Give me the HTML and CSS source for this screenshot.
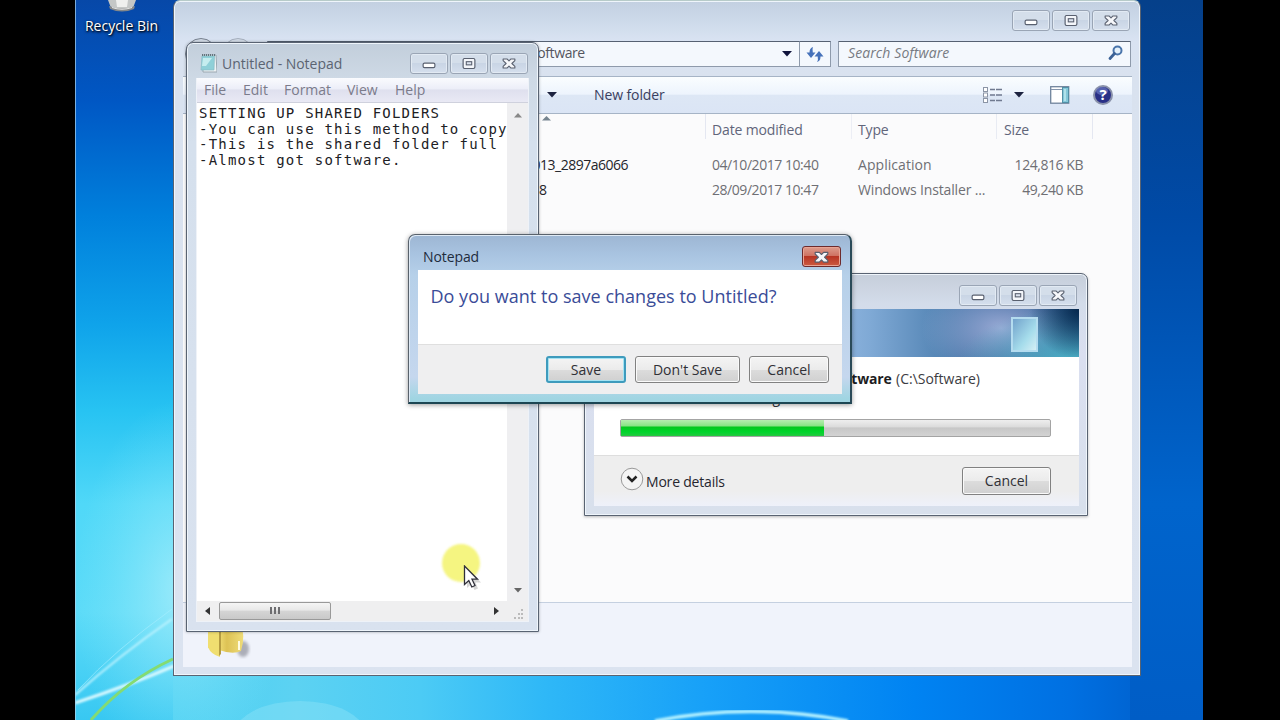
FILE: index.html
```html
<!DOCTYPE html>
<html lang="en">
<head>
<meta charset="utf-8">
<title>Desktop</title>
<link rel="stylesheet" href="styles.css">
</head>
<body>
<svg width="0" height="0" class="defs">
  <symbol id="min" viewBox="0 0 38 21"><rect x="12.5" y="10" width="13" height="5" rx="1.5" fill="#fff" stroke="#59606f" stroke-width="1.3"/></symbol>
  <symbol id="max" viewBox="0 0 38 21"><rect x="12.500" y="5" width="13" height="11" rx="1.5" fill="#f4f6fa" stroke="#59606f" stroke-width="1.3"/><rect x="16" y="8.500" width="6" height="3.500" fill="#dce3ee" stroke="#59606f" stroke-width="1.2"/></symbol>
  <symbol id="close" viewBox="0 0 38 21"><path d="M12.500 5.500h4.300l2.200 2.200 2.200-2.200h4.300v1.700l-3.300 3.300 3.300 3.300v1.700h-4.300L19 13.300l-2.200 2.200h-4.300v-1.700l3.300-3.300-3.300-3.300z" fill="#f6f7fa" stroke="#59606f" stroke-width="1.200" stroke-linejoin="round"/></symbol>
</svg>
<main class="desktop">
  <svg class="wallpaper" viewBox="75 0 1128 720">
    <defs>
      <linearGradient id="lg" x1="0" y1="0" x2="0" y2="1"><stop offset="0" stop-color="#0748a8"/><stop offset=".14" stop-color="#0057c4"/><stop offset=".3" stop-color="#0080dc"/><stop offset=".45" stop-color="#0fa3ea"/><stop offset=".57" stop-color="#27c3f2"/><stop offset=".7" stop-color="#50d8f8"/><stop offset=".85" stop-color="#5cdbf8"/><stop offset="1" stop-color="#38c8f2"/></linearGradient>
      <linearGradient id="rg" x1="0" y1="0" x2="0" y2="1"><stop offset="0" stop-color="#05408a"/><stop offset=".3" stop-color="#004aa6"/><stop offset=".7" stop-color="#0064cc"/><stop offset="1" stop-color="#005dc6"/></linearGradient>
      <linearGradient id="bg"><stop offset="0" stop-color="#4bd0f3"/><stop offset=".12" stop-color="#5cd2f2"/><stop offset=".24" stop-color="#4ccbf5"/><stop offset=".36" stop-color="#2fb8f7"/><stop offset=".52" stop-color="#17a0f8"/><stop offset=".72" stop-color="#0083f2"/><stop offset=".87" stop-color="#0070e2"/><stop offset="1" stop-color="#0058c2"/></linearGradient>
      <radialGradient id="glow"><stop offset="0" stop-color="#c4f4fc" stop-opacity=".6"/><stop offset="1" stop-color="#8beafa" stop-opacity="0"/></radialGradient>
      <filter id="soft"><feGaussianBlur stdDeviation="1.200"/></filter>
    </defs>
    <rect x="75" width="300" height="720" fill="url(#lg)"/>
    <rect x="173" y="660" width="1030" height="60" fill="url(#bg)"/>
    <rect x="1130" width="73" height="720" fill="url(#rg)"/>
    <ellipse cx="180" cy="590" rx="105" ry="190" fill="url(#glow)"/>
    <ellipse cx="300" cy="735" rx="66" ry="34" fill="#9ce8f8" opacity=".35"/>
    <path d="M75 703Q130 685 174 666" stroke="#d9f9ff" stroke-width="3" fill="none" filter="url(#soft)"/>
    <path d="M75 695Q120 655 172 619" stroke="#bdf3ff" stroke-width="2" fill="none" filter="url(#soft)"/>
    <path d="M78 690Q115 650 172 609" stroke="#a9efff" stroke-width="1" fill="none" opacity=".6"/>
    <path d="M91 720Q125 681 173 659" stroke="#84db72" stroke-width="3" fill="none"/>
    <path d="M655 721Q750 702 848 721" stroke="#b6f2ff" stroke-width="3.500" fill="none" filter="url(#soft)"/>
    <rect x="75" width="1" height="720" fill="#a9d5ef" opacity=".7"/>
  </svg>

  <div class="recycle">
    <svg width="34" height="12" viewBox="0 0 34 12"><path d="M3 0h28l-3 8q-11 5-22 0z" fill="#c4c7c6"/><path d="M11 0h12l-1 7H12z" fill="#eff0ee"/><path d="M4 6q13 5 26 0l-1 3q-12 5-24 0z" fill="#85888a"/><path d="M7 7.500q10 3.500 20 0" stroke="#e8e8e6" fill="none"/></svg>
    <span>Recycle Bin</span>
  </div>

  <section class="window explorer">
    <div class="controls"><svg><use href="#min"/></svg><svg><use href="#max"/></svg><svg><use href="#close"/></svg></div>
    <div class="nav">
      <div class="navbtns"><i></i><i></i></div>
      <div class="address"><span class="t-addr">Software</span><svg width="10" height="6"><path d="M0 0h10L5 5.500z" fill="#10143c"/></svg></div>
      <div class="refresh"><svg width="18" height="17" viewBox="0 0 18 17"><path d="M7 1Q3.500 2 3.500 6.500H.5L5 12 9.500 6.500H6.800Q6 3 7 1zM11 16Q14.500 15 14.500 10.500H17.500L13 5 8.500 10.500H11.700Q12.500 14 11 16z" fill="#4672ba"/></svg></div>
      <div class="search"><span class="t-search">Search Software</span><svg width="16" height="16" viewBox="0 0 16 16"><circle cx="9.500" cy="5.500" r="4" fill="#e5f1fb" stroke="#4a75ab" stroke-width="2"/><path d="M6.500 8.500L2 13.500" stroke="#3c6296" stroke-width="2.800" stroke-linecap="round"/></svg></div>
    </div>
    <div class="client">
      <div class="toolbar">
        <svg class="tb-arrow" width="10" height="6"><path d="M0 0h10L5 5.500z" fill="#1d2340"/></svg>
        <span class="t-new">New folder</span>
        <svg class="tb-view" width="19" height="17" viewBox="0 0 19 17"><g fill="#fff" stroke="#8b95a6"><rect x=".5" y=".5" width="4" height="4"/><rect x=".5" y="6" width="4" height="4"/><rect x=".5" y="11.500" width="4" height="4"/></g><path d="M7 2.500h5m1 0h6M7 8h5m1 0h6M7 13.500h5m1 0h6" stroke="#707a90" stroke-width="1.700"/></svg>
        <svg class="tb-view2" width="10" height="6"><path d="M0 0h10L5 5.500z" fill="#1d2340"/></svg>
        <svg class="tb-pane" width="20" height="18" viewBox="0 0 20 18"><rect x=".7" y=".7" width="18" height="16.500" fill="#fff" stroke="#6f839c" stroke-width="1.300"/><path d="M1 3.500h11" stroke="#8495ac"/><rect x="12.500" y="1.500" width="6" height="15" fill="#84c7d9" stroke="#528fa5"/><path d="M15 3v12" stroke="#b0e1ea" stroke-width="2"/></svg>
        <svg class="tb-help" width="20" height="20" viewBox="0 0 20 20"><circle cx="10" cy="10" r="9" fill="#293087" stroke="#8991aa" stroke-width="2"/><ellipse cx="9" cy="6" rx="6" ry="4" fill="#7584ca" opacity=".6"/><text x="10" y="15" text-anchor="middle" class="q">?</text></svg>
      </div>
      <div class="files">
        <svg class="sort" width="9" height="5"><path d="M0 4.500L4.500 0 9 4.500z" fill="#76848f"/></svg>
        <div class="row head"><span></span><span class="t-dm">Date modified</span><span class="t-type">Type</span><span class="t-size">Size</span></div>
        <div class="row r1"><span class="name t-n1">2013_2897a6066</span><span class="t-date">04/10/2017 10:40</span><span class="t-app">Application</span><span class="size">124,816 KB</span></div>
        <div class="row r2"><span class="name n2">8</span><span class="t-date">28/09/2017 10:47</span><span class="t-win">Windows Installer ...</span><span class="size">49,240 KB</span></div>
      </div>
      <div class="details"><svg width="44" height="50" viewBox="0 0 44 50"><defs><linearGradient id="fold"><stop stop-color="#f1de75"/><stop offset=".35" stop-color="#ddc255"/><stop offset="1" stop-color="#efdc78"/></linearGradient><filter id="fs"><feGaussianBlur stdDeviation="1.800"/></filter></defs><ellipse cx="35" cy="39" rx="6" ry="8" fill="#90929c" opacity=".7" filter="url(#fs)"/><path d="M10 10h22q6 16 1 31-8 4-22-1z" fill="url(#fold)"/><path d="M-1 10h13v37Q1 44-1 34z" fill="#f0de70"/><path d="M11 10h2v34l-2 2z" fill="#b59c42"/><path d="M31 31v9" stroke="#fffbe0" stroke-width="2"/></svg></div>
    </div>
  </section>

  <section class="window copy">
    <div class="controls"><svg><use href="#min"/></svg><svg><use href="#max"/></svg><svg><use href="#close"/></svg></div>
    <div class="client">
      <div class="banner"><svg width="34" height="39" viewBox="0 0 34 39"><defs><linearGradient id="pg" x2="1" y2="1"><stop stop-color="#6f9fca"/><stop offset=".6" stop-color="#a5dceb"/><stop offset="1" stop-color="#d9f1f6"/></linearGradient></defs><rect x="5" y="3" width="25" height="33" fill="url(#pg)" stroke="#b4dcef" stroke-width="2"/></svg></div>
      <div class="info"><p><b>to Software</b><span class="t-path">(C:\Software)</span></p><p class="remain">About 45 seconds remaining</p>
        <div class="progress"><div></div></div></div>
      <div class="foot"><svg width="24" height="24" viewBox="0 0 24 24"><circle cx="12" cy="12" r="10.800" fill="#f4f4f4" stroke="#999"/><path d="M7.500 9.500L12 14l4.500-4.500" fill="none" stroke="#222" stroke-width="2.500"/></svg><span class="t-more">More details</span><button>Cancel</button></div>
    </div>
  </section>

  <section class="window notepad">
    <div class="titlebar"><svg width="18" height="20" viewBox="0 0 18 20"><path d="M4 2h13l1 17H4z" fill="#eef2f4" stroke="#9aa7b0"/><path d="M3 3h12.500l-.5 14H2z" fill="#8fd0d8" stroke="#8abcc6" stroke-width=".7"/><path d="M4 5h9l-6 8H3z" fill="#c5edef"/><path d="M3 2h13" stroke="#64747d" stroke-width="2" stroke-dasharray="1 1"/></svg><span class="t-title">Untitled - Notepad</span>
      <div class="controls"><svg><use href="#min"/></svg><svg><use href="#max"/></svg><svg><use href="#close"/></svg></div></div>
    <div class="client">
      <div class="menu"><span>File</span><span>Edit</span><span>Format</span><span>View</span><span>Help</span></div>
      <div class="editor"><pre>SETTING UP SHARED FOLDERS
-You can use this method to copy
-This is the shared folder full
-Almost got software.</pre>
        <div class="vbar"><svg width="8" height="5"><path d="M0 4.500L4 0 8 4.500z" fill="#888"/></svg><svg width="8" height="5"><path d="M0 0h8L4 4.500z" fill="#666"/></svg></div></div>
      <div class="hbar"><svg width="5" height="8"><path d="M5 0v8L0 4z" fill="#333"/></svg><div class="thumb"><i></i><i></i><i></i></div><svg class="ra" width="5" height="8"><path d="M0 0v8l5-4z" fill="#333"/></svg><svg class="grip" width="10" height="11"><path d="M8 0v11M5 4v7M1 8v3" stroke="#bbb" stroke-width="2" stroke-dasharray="2 2"/></svg></div>
    </div>
  </section>

  <section class="window dialog">
    <div class="titlebar"><span class="t-dt">Notepad</span><div class="red"><svg viewBox="0 0 38 21"><use href="#close"/></svg></div></div>
    <div class="client"><div class="question"><span>Do you want to save changes to Untitled?</span></div>
      <div class="buttons"><button class="default">Save</button><button class="dont">Don't Save</button><button>Cancel</button></div></div>
  </section>

  <div class="halo"></div>
  <svg class="cursor" width="20" height="26" viewBox="0 0 20 26"><path d="M4 3v20l4.500-4 3 6 3.500-1.500-2.500-6H18z" fill="#777" opacity=".3"/><path d="M1.500 1v18.500l4.300-4 3 6.500 3.200-1.500-3-6.300h5.500z" fill="#fff" stroke="#30303a" stroke-width="1.300"/></svg>
</main>
</body>
</html>
```
FILE: styles.css
```css
* { box-sizing: border-box; }
body { margin: 0; width: 1280px; height: 720px; overflow: hidden; background: #000; font: 14px/20px "Open Sans", "Noto Sans", sans-serif; color: #26262e; }
.defs { position: absolute; }
svg { display: block; flex: none; }
span { white-space: nowrap; }
p { margin: 0; }
.desktop { position: relative; width: 1280px; height: 720px; overflow: hidden; }
.wallpaper { position: absolute; left: 75px; top: 0; width: 1128px; height: 720px; }
.recycle { position: absolute; left: 75px; top: 0; width: 93px; display: flex; flex-direction: column; align-items: center; color: #fff; text-shadow: 1px 1px 2px #000, 0 1px 3px #001840; }
.recycle span { margin-top: 4px; }

.window { position: absolute; display: flex; flex-direction: column; border: 1px solid #596372; border-radius: 7px 7px 0 0; box-shadow: inset 0 0 0 1px #eff5fb; padding: 0 8px 8px; }
.client { display: flex; flex-direction: column; flex: 1; min-height: 0; }
.controls { display: flex; gap: 2px; margin-left: auto; }
.controls svg { width: 38px; height: 21px; border: 1px solid #9aa5b5; border-radius: 3px; background: linear-gradient(#d4deea 45%, #c8d4e4 46%, #d5dfed); box-shadow: inset 0 0 0 1px #e2eaf3; }
button { font: inherit; color: #303036; padding: 0; border: 1px solid #818181; border-radius: 3px; background: linear-gradient(#f4f4f4 0, #ebebeb 50%, #dcdcdc 51%, #d0d0d0); box-shadow: inset 0 0 0 1px #fafafa; }

.explorer { left: 173px; top: 0; width: 968px; height: 676px; padding: 0 8px 8px 9px; background: linear-gradient(#c3d0e1 0, #cddaea 20px, #d9e3f2 40px, #d9e2ef 75px, #dbe3f0 100%); border-top-color: #b7cbc9; }
.explorer > .controls { margin-top: 9px; margin-right: 2px; }
.nav { display: flex; margin-top: 10px; height: 26px; }
.navbtns { display: flex; width: 84px; gap: 5px; padding-left: 2px; }
.navbtns i { width: 32px; height: 32px; margin-top: -3px; border-radius: 50%; border: 1px solid #77818f; background: #d3dce8; }
.navbtns i + i { border-color: #a5afbd; }
.address, .refresh, .search { border: 1px solid #8e9aab; border-top-color: #566172; background: #f4f8fd; display: flex; align-items: center; }
.address { width: 533px; padding: 0 0 2px 262px; color: #55565f; }
.t-addr { letter-spacing: -.4px; }
.address svg { margin-left: auto; margin-right: 7px; margin-top: 2px; }
.refresh { width: 31px; border-left: 0; justify-content: center; }
.search { width: 293px; margin-left: 7px; padding: 0 6px 2px 9px; justify-content: space-between; color: #777b82; font-style: italic; border-radius: 1px; letter-spacing: .1px; }
.explorer .client { margin-top: 9px; }
.toolbar { height: 38px; flex: none; border: solid #a6b4c6; border-width: 1px 0; background: linear-gradient(#fafdff 0, #edf4fd 48%, #dde7f5 50%, #dbe5f5); display: flex; align-items: center; padding-left: 364px; color: #3a4060; }
.t-new { margin-left: 37px; width: 72px; letter-spacing: -.1px; }
.tb-view { margin-left: 317px; }
.tb-view2 { margin-left: 12px; }
.tb-pane { margin-left: 26px; }
.tb-help { margin-left: 23px; }
.q { font: bold 15px "Open Sans", sans-serif; fill: #fff; }
.files { flex: 1; background: #fbfbfc; display: flex; flex-direction: column; }
.sort { margin: 2px 0 -7px 359px; }
.row { display: grid; grid-template-columns: 529px 146px 146px 79px; height: 20px; color: #6f6f74; flex: none; }
.head { height: 25px; color: #61657a; background: linear-gradient(90deg, transparent 522px, #e4e7f1 522px 523px, transparent 523px 668px, #eceef5 668px 669px, transparent 669px 813px, #e8ebf3 813px 814px, transparent 814px 909px, #e4e7f1 909px 910px, transparent 910px); padding-top: 6px; letter-spacing: -.15px; }
.row.r1 { margin-top: 16px; }
.row.r2 { margin-top: 5px; }
.t-date { letter-spacing: -.45px; }
.t-app { letter-spacing: 0.05px; }
.t-win { letter-spacing: -.15px; }
.name { color: #24242a; padding-left: 342px; letter-spacing: -.5px; }
.name.n2 { padding-left: 356px; }
.size { text-align: right; letter-spacing: -.45px; }
.details { height: 65px; flex: none; background: #f0f3fb; border-top: 1px solid #c5d0e0; padding: 7px 0 0 25px; }

.copy { left: 584px; top: 273px; width: 504px; height: 243px; padding: 0 8px 9px 9px; background: linear-gradient(#c6ceda 0, #d3dcea 30px, #dadff0 80px, #d8e0ec 100%); box-shadow: inset 0 0 0 1px #eff5fb, 0 1px 3px #0004; }
.copy .controls { margin-top: 11px; margin-right: 2px; }
.copy .client { margin-top: 3px; background: #fff; }
.banner { height: 48px; flex: none; display: flex; justify-content: flex-end; padding: 6px 38px 0; background: radial-gradient(circle at 100% 0, #06284d 0, #0b315800 50px), radial-gradient(120px 55px at 100% 110%, #4fb4c8 0, #3f9fbb00 100%), radial-gradient(80px 50px at 84% 40%, #9aabd6 0, #8aa0d000 100%), linear-gradient(90deg, #8fb5df 0 50%, #7fa9d5 57%, #5283b3 72%, #2d5a92 84%, #2a6298 100%); }
.info { height: 98px; flex: none; padding: 12px 28px 0 26px; color: #33333a; }
.info p { height: 20px; white-space: nowrap; }
.info p:first-child { padding-left: 192px; color: #3c3c42; }
.info b { display: inline-block; width: 79px; text-align: right; color: #1d1d22; letter-spacing: -.15px; }
.t-path { margin-left: 5px; }
.info .remain { height: 30px; line-height: 17px; width: 160px; direction: rtl; }
.progress { height: 18px; border: 1px solid #a4a4a4; border-radius: 2px; background: linear-gradient(#eee 0, #dcdcdc 42%, #c7c7c7 50%, #d3d3d3); }
.progress div { width: 203px; height: 16px; background: linear-gradient(#b6eeb0 0, #8ae486 35%, #03c81e 46%, #00d52c 75%, #25c840); }
.foot { flex: 1; display: flex; align-items: flex-start; background: linear-gradient(#eeeeee 70%, #eef1fa); border-top: 1px solid #dedede; padding: 11px 28px 0 26px; }
.foot span { margin: 5px 0 0 2px; letter-spacing: -.2px; }
.foot button { width: 89px; height: 28px; margin-left: auto; }

.notepad { left: 186px; top: 42px; width: 353px; height: 590px; padding: 0 9px 9px; background: linear-gradient(#c2cedb 0, #ced9e5 35px, #d5e0ed 100px, #d9e2ef 100%); box-shadow: inset 0 0 0 1px #eff5fb, 0 0 3px #0005; }
.notepad .titlebar { display: flex; height: 35px; padding: 10px 1px 0 3px; color: #5b6472; }
.notepad .titlebar > span { margin: 1px 0 0 5px; letter-spacing: -.03px; }
.notepad .client { background: #f0f0f0; border: 1px solid #eef2f8; border-top: 0; }
.menu { height: 25px; flex: none; display: grid; grid-template-columns: 39px 41px 63px 48px auto; align-items: center; background: linear-gradient(#fafbfe 0, #eceef8 45%, #dfe0ee 50%, #e9e9f4); border-bottom: 1px solid #cfd1dd; padding-left: 7px; color: #7b7b8b; }
.editor { flex: 1; display: flex; min-height: 0; }
pre { margin: 0; padding: 3px 0 0 2px; width: 311px; overflow: hidden; background: #fff; color: #202024; font: 14px/15.600px "DejaVu Sans Mono", monospace; letter-spacing: 1.220px; }
.vbar { width: 21px; background: #efeff1; display: flex; flex-direction: column; justify-content: space-between; align-items: center; padding: 10px 0 8px; }
.hbar { height: 20px; flex: none; display: flex; align-items: center; padding: 0 0 1px 8px; background: #efeff0; }
.thumb { width: 112px; height: 18px; margin-left: 9px; border: 1px solid #999; border-radius: 2px; background: linear-gradient(#f5f5f5 0, #e8e8e8 45%, #d5d5d5 50%, #c9c9c9); display: flex; justify-content: center; gap: 2px; padding-top: 4px; }
.thumb i { width: 2px; height: 7px; background: #6d6d70; }
.ra { margin-left: 163px; }
.grip { margin: 8px 0 0 15px; }

.dialog { left: 408px; top: 234px; width: 444px; height: 170px; border: solid; border-color: #59626c #2a4a58 #1c4653 #59626c; border-width: 1px 2px 2px 1px; padding: 0 8px 8px 9px; background: linear-gradient(#9db6d3 0, #a9c4e1 20px, #b6d0e9 40px, #c5d7ee 85%, #a0d5e2 98%); box-shadow: inset 1px 1px 0 #dfeaf5, 0 1px 5px #0006; }
.dialog .titlebar { display: flex; height: 35px; padding: 12px 1px 0 5px; justify-content: space-between; color: #1e2b3c; }
.t-dt { letter-spacing: -.1px; }
.red { width: 39px; height: 21px; margin-top: -1px; border: 1px solid #6d2b2d; border-radius: 3px; background: linear-gradient(#dd9c8d 0, #cf7363 45%, #b83524 50%, #cc5a40); box-shadow: inset 0 0 0 1px #e9a494; }
.dialog .client { background: #fff; }
.question { height: 74px; flex: none; padding: 13px 0 0 12.500px; font-size: 18px; line-height: 26px; color: #3a4c98; letter-spacing: .02px; }
.buttons { flex: 1; display: flex; justify-content: flex-end; gap: 9px; padding: 11px 13px 0 0; background: #efeff0; border-top: 1px solid #dfdfdf; }
.buttons button { width: 80px; height: 27px; }
.buttons .dont { width: 105px; }
.buttons .default { border: 2px solid #3e9bbd; box-shadow: inset 0 0 0 1px #a5e3f3; }

.halo { position: absolute; left: 442px; top: 544px; width: 38px; height: 38px; border-radius: 50%; background: #f4f474; opacity: .9; filter: blur(.8px); }
.cursor { position: absolute; left: 463px; top: 565px; }
```
